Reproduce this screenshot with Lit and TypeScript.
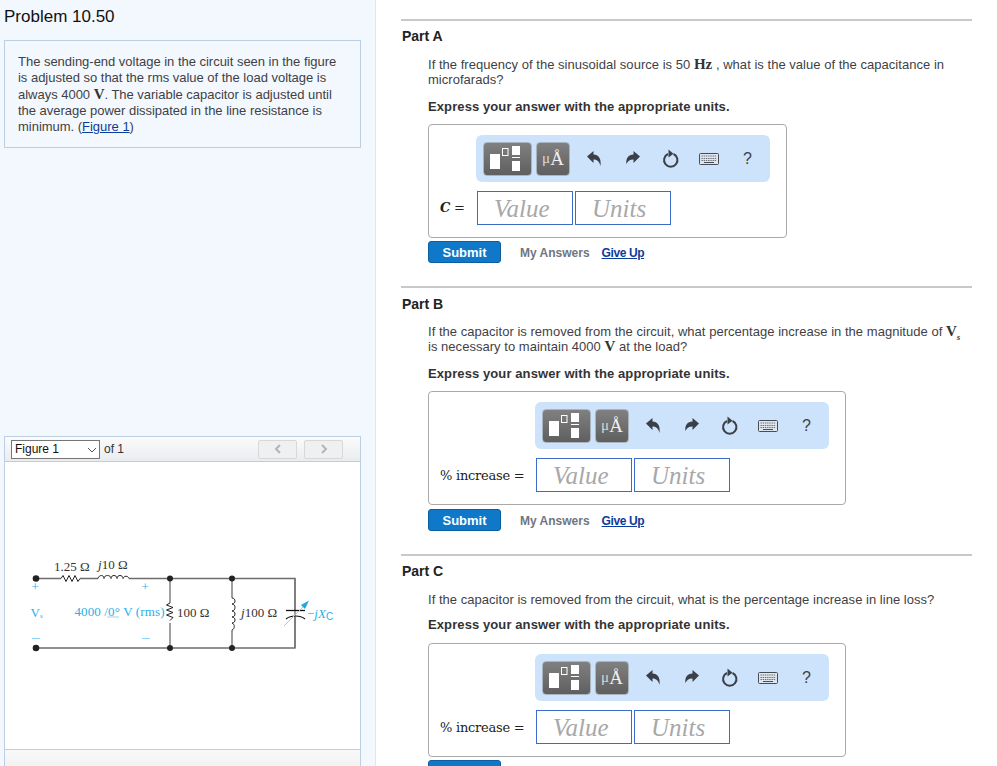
import { LitElement, html, css, svg } from "lit";
import { customElement } from "lit/decorators.js";

const toolbar = html`<div class="toolbar">
  <span class="tbtn tpl"><svg width="49" height="34" viewBox="0 0 49 34"><rect x="7" y="12" width="10" height="15" fill="#fff"/><rect x="19.500" y="6.500" width="5.500" height="7" fill="none" stroke="#fff" stroke-width="1"/><rect x="29" y="4" width="8" height="9" fill="#fff"/><rect x="29" y="15" width="8" height="1" fill="#fff"/><rect x="29" y="19" width="8" height="10" fill="#fff"/></svg></span>
  <span class="tbtn unit"><span class="mu">μ</span>Å</span>
  <svg class="ic u" width="16" height="17" viewBox="0 0 16 17"><path d="M1 6.500 L7.500 1 V4.500 C12.500 4.500 15.500 8.500 14.500 16 C13.500 12 11.500 9.500 7.500 9.500 V13 Z" fill="#3b4048"/></svg>
  <svg class="ic r" width="16" height="17" viewBox="0 0 16 17"><path d="M15 6.500 L8.500 1 V4.500 C3.500 4.500 .5 8.500 1.500 14 C2.500 11.500 4.500 9.500 8.500 9.500 V13 Z" fill="#3b4048"/></svg>
  <svg class="ic c" width="18" height="20" viewBox="0 0 18 20"><path d="M11.500 5 A6.700 6.700 0 1 1 6 5" fill="none" stroke="#3b4048" stroke-width="2"/><path d="M6.500 .5 L11.500 4.800 L6.500 8.500 Z" fill="#3b4048"/></svg>
  <svg class="ic k" width="20" height="12" viewBox="0 0 20 12"><rect x="0.500" y="0.500" width="19" height="11" rx="1" fill="#dfe5ec" stroke="#474c54"/><path d="M2.500 3H17.500M2.500 5.500H17.500M2.500 7.500H17.500" stroke="#6a6f77" stroke-dasharray="1.400 .8"/><path d="M5 9.500H15" stroke="#474c54"/></svg>
  <span class="q">?</span>
</div>`;

function answerBox(label: unknown) {
  return html`<div class="box">
    <span></span>${toolbar}
    <span class="lbl">${label}</span>
    <div class="inputs"><span class="inp">Value</span><span class="inp">Units</span></div>
  </div>`;
}

const actions = html`<div class="actions"><span class="submit">Submit</span><span class="my">My Answers</span><a class="give">Give Up</a></div>`;

const circuit = svg`
<g fill="none" stroke="#6d6d6d" stroke-width="1.300">
  <path d="M36 578.500H61M80 578.500H98M129 578.500H295V648H36"/>
  <path d="M170 578.500V603M170 623V648M232 578.500V598M232 630V648"/>
</g>
<g fill="none" stroke="#222" stroke-width="1">
  <path d="M61 578.500l2-3 3 6 3-6 3 6 3-6 3 6 2-3"/>
  <path d="M98 578.500c1-4 6-4 6 0c0-4 7-4 7 0c0-4 6-4 6 0c0-4 6-4 6 0c1-3 5-3 6 0"/>
  <path d="M170 603l-3.500 2 6.500 2.500-6.500 2.500 6.500 2.500-6.500 2.500 6.500 2.500-3 3"/>
  <path d="M232 598c4 0 4 6 0 6c4 0 4 7 0 7c4 0 4 6 0 6c4 0 4 6 0 6c3 1 3 6 0 7"/>
  <path d="M295 578.500V610M295 617V648" stroke="#6d6d6d" stroke-width="1.300"/>
</g>
<path d="M286 610.500H305" stroke="#111" stroke-width="1.300"/>
<path d="M286 619c5-4 14-4 19 0" fill="none" stroke="#111" stroke-width="1.200"/>
<path d="M284 626L304 606" stroke="#8ad6f5" stroke-width="1"/>
<path d="M309 600.500L301 605L305 609Z" fill="#1fa8e0"/>
<g fill="#222">
  <circle cx="36" cy="578.500" r="3.300"/><circle cx="170" cy="578.500" r="3"/><circle cx="232" cy="578.500" r="3"/>
  <circle cx="36" cy="648" r="3.300"/><circle cx="170" cy="648" r="3"/><circle cx="232" cy="648" r="3"/>
</g>
<g class="ct">
  <text x="54" y="571">1.25 Ω</text>
  <text x="98" y="569"><tspan font-style="italic">j</tspan>10 Ω</text>
  <text x="177" y="617">100 Ω</text>
  <text x="241" y="617"><tspan font-style="italic">j</tspan>100 Ω</text>
</g>
<g class="cc">
  <text x="74.500" y="616" textLength="90">4000 /0° V (rms)</text>
  <path d="M107 617H119" stroke="#7ccdf0" stroke-width=".8"/>
  <text x="30.500" y="617">V<tspan font-size="7" dy="1">s</tspan></text>
  <text x="307" y="618" font-size="14">−<tspan font-style="italic">jX</tspan><tspan font-size="10" font-family="Liberation Sans" dy="2">C</tspan></text>
  <text x="31.500" y="591" font-size="11">+</text>
  <text x="141.500" y="591" font-size="11">+</text>
  <path d="M32 638.500H40M142 638.500H150" stroke="#8ad6f5" stroke-width="1"/>
</g>`;

@customElement("app-root")
export class AppRoot extends LitElement {
  static styles = css`
    :host { display: block; height: 766px; overflow: hidden; font-family: "Liberation Sans", Arial, sans-serif; color: #3f3f46; font-size: 13px; background: #fff; }
    .page { display: grid; grid-template-columns: 376px 1fr; height: 766px; }
    .left { background: #f3f8fe; border-right: 1px solid #dfe6ee; box-sizing: border-box; padding: 8px 14px 0 4px; height: 766px; }
    h1 { margin: 0; font-weight: 400; font-size: 17px; line-height: 18px; color: #111; }
    .statement { margin-top: 14px; border: 1px solid #bccfe2; padding: 13px 13px 0 13px; height: 108px; box-sizing: border-box; line-height: 16.25px; letter-spacing: -0.02px; }
    .statement b, .q-text b { font-family: "Liberation Serif", serif; font-size: 15px; line-height: 1; letter-spacing: 0; color: #333; }
    .q-text sub { font-size: 9px; font-style: italic; line-height: 0; }
    a { color: #0b3c9c; text-decoration: underline; }
    .figure { margin-top: 288px; border: 1px solid #bccfe2; border-bottom: none; display: flex; flex-direction: column; height: 340px; box-sizing: border-box; }
    .fig-head { height: 25px; box-sizing: border-box; border-bottom: 1px solid #bccfe2; background: linear-gradient(#fbfbfb, #e9ecef); display: flex; align-items: center; padding: 0 17px 0 6px; gap: 4px; font-size: 12px; }
    .sel { position: relative; display: block; width: 89px; height: 19px; }
    select { appearance: none; display: block; width: 89px; height: 19px; box-sizing: border-box; font: 12px "Liberation Sans", Arial, sans-serif; color: #111; border: 1px solid #767676; background: #fff; padding: 0 0 0 3px; border-radius: 0; }
    .chev { position: absolute; right: 2px; top: 6px; pointer-events: none; }
    .ofn { flex: 1; color: #333; }
    .nav { width: 39px; height: 19px; box-sizing: border-box; border: 1px solid #d8d8d8; border-radius: 2px; background: #eef0f2; display: flex; align-items: center; justify-content: center; margin-left: 3px; }
    .fig-body { height: 287px; background: #fff; flex: none; }
    .fig-body svg { display: block; }
    .ct text { font: 13px "Liberation Serif", serif; fill: #333; }
    .cc text { font-family: "Liberation Serif", serif; font-size: 13px; fill: #29b0e8; }
    .fig-foot { flex: 1; border-top: 1px solid #bccfe2; background: linear-gradient(#f9f9f9, #eeeeee); }
    .right { padding: 19px 25px 0 25px; min-width: 0; }
    .part { border-top: 2px solid #c9c9c9; }
    .part h2 { margin: 0; padding: 8px 0 0 1px; font-size: 14px; line-height: 16px; font-weight: 700; color: #222; }
    .pb { padding-left: 27px; }
    .q-text { margin: 12px 0 0 0; line-height: 15px; letter-spacing: 0.03px; }
    .express { margin: 12px 0 0 0; font-weight: 700; font-size: 13px; line-height: 16px; color: #333; letter-spacing: 0.1px; }
    .box { display: inline-grid; grid-template-columns: auto auto; align-content: start; align-items: center; vertical-align: top; margin-top: 9px; box-sizing: border-box; height: 114px; border: 1px solid #a9a9a9; border-radius: 4px; padding: 10px 16px 0 11px; }
    .lbl { font: 13px "DejaVu Serif", serif; color: #222; white-space: nowrap; margin-top: 9px; width: 96px; letter-spacing: -0.25px; }
    .lbl i { font-weight: 700; }
    .toolbar { grid-column: 2; margin-left: -1px; width: 294px; height: 47px; box-sizing: border-box; background: #cde3fb; border-radius: 6px; display: flex; align-items: center; padding: 0 0 0 7px; }
    .tbtn { height: 34px; box-sizing: border-box; border-radius: 4px; background: linear-gradient(#808080, #5f5f5f); border: 1px solid #aab4be; display: flex; align-items: center; justify-content: center; color: #eee; }
    .tpl { width: 49px; }
    .tpl svg { margin: -1px; }
    .unit { width: 34px; margin-left: 4px; font: 19px "Liberation Serif", serif; }
    .mu { font-size: 15px; color: #d8d8d8; }
    .ic { flex: none; }
    .u { margin-left: 16px; }
    .r { margin-left: 23px; }
    .c { margin-left: 21px; }
    .k { margin-left: 19px; }
    .q { margin-left: 24px; font-size: 16px; color: #3b4048; }
    .inputs { display: flex; gap: 2px; margin-top: 9px; }
    .inp { width: 96px; height: 34px; box-sizing: border-box; border: 1px solid #3a6cc8; font: italic 25px "Liberation Serif", serif; color: #a8a8a8; padding-left: 16px; line-height: 33px; background: #fff; }
    .actions { display: flex; align-items: center; margin-top: 3px; height: 22px; font-size: 12px; }
    .b .actions { margin-top: 4px; }
    .submit { width: 73px; height: 22px; box-sizing: border-box; background: #0f78c8; border: 1px solid #0b5f9f; border-radius: 3px; color: #fff; font-weight: 700; font-size: 13px; text-align: center; line-height: 21px; }
    .my { margin-left: 19px; padding-top: 1px; font-weight: 700; color: #6f7680; }
    .give { margin-left: 12px; padding-top: 1px; font-weight: 700; color: #0b3c9c; letter-spacing: -0.4px; }
    .gap1 { height: 23px; }
    .gap2 { height: 23px; }
    .a h2 { padding-top: 7px; }
    .a .q-text { margin-top: 13px; }
    .a .lbl { width: 37px; margin-top: 8px; }
    .c3 h2 { padding-top: 7px; }
    .c3 .q-text { margin-top: 13px; }
    .c3 .express { margin-top: 10px; }
    .c3 .box { margin-top: 10px; }
  `;

  render() {
    const cLabel = html`<i>C</i> =`;
    const pLabel = html`% increase =`;
    return html`<div class="page">
      <div class="left">
        <h1>Problem 10.50</h1>
        <div class="statement">The sending-end voltage in the circuit seen in the figure is adjusted so that the rms value of the load voltage is always 4000 <b>V</b>. The variable capacitor is adjusted until the average power dissipated in the line resistance is minimum. (<a>Figure 1</a>)</div>
        <div class="figure">
          <div class="fig-head">
            <span class="sel"><select><option>Figure 1</option></select><svg class="chev" width="12" height="8" viewBox="0 0 12 8"><path d="M2 2L6 6L10 2" fill="none" stroke="#555" stroke-width="1"/></svg></span>
            <span class="ofn">of 1</span>
            <span class="nav"><svg width="8" height="10" viewBox="0 0 8 10"><path d="M6 1L2 5L6 9" fill="none" stroke="#b5b5b5" stroke-width="2"/></svg></span>
            <span class="nav"><svg width="8" height="10" viewBox="0 0 8 10"><path d="M2 1L6 5L2 9" fill="none" stroke="#b5b5b5" stroke-width="2"/></svg></span>
          </div>
          <div class="fig-body"><svg width="356" height="287" viewBox="5 462 356 287">${circuit}</svg></div>
          <div class="fig-foot"></div>
        </div>
      </div>
      <div class="right">
        <section class="part a">
          <h2>Part A</h2>
          <div class="pb">
            <p class="q-text">If the frequency of the sinusoidal source is 50 <b>Hz</b> , what is the value of the capacitance in microfarads?</p>
            <p class="express">Express your answer with the appropriate units.</p>
            ${answerBox(cLabel)}
            ${actions}
            <div class="gap1"></div>
          </div>
        </section>
        <section class="part b">
          <h2>Part B</h2>
          <div class="pb">
            <p class="q-text">If the capacitor is removed from the circuit, what percentage increase in the magnitude of <b>V<sub>s</sub></b><br>is necessary to maintain 4000 <b>V</b> at the load?</p>
            <p class="express">Express your answer with the appropriate units.</p>
            ${answerBox(pLabel)}
            ${actions}
            <div class="gap2"></div>
          </div>
        </section>
        <section class="part c3">
          <h2>Part C</h2>
          <div class="pb">
            <p class="q-text">If the capacitor is removed from the circuit, what is the percentage increase in line loss?</p>
            <p class="express">Express your answer with the appropriate units.</p>
            ${answerBox(pLabel)}
            ${actions}
          </div>
        </section>
      </div>
    </div>`;
  }
}
